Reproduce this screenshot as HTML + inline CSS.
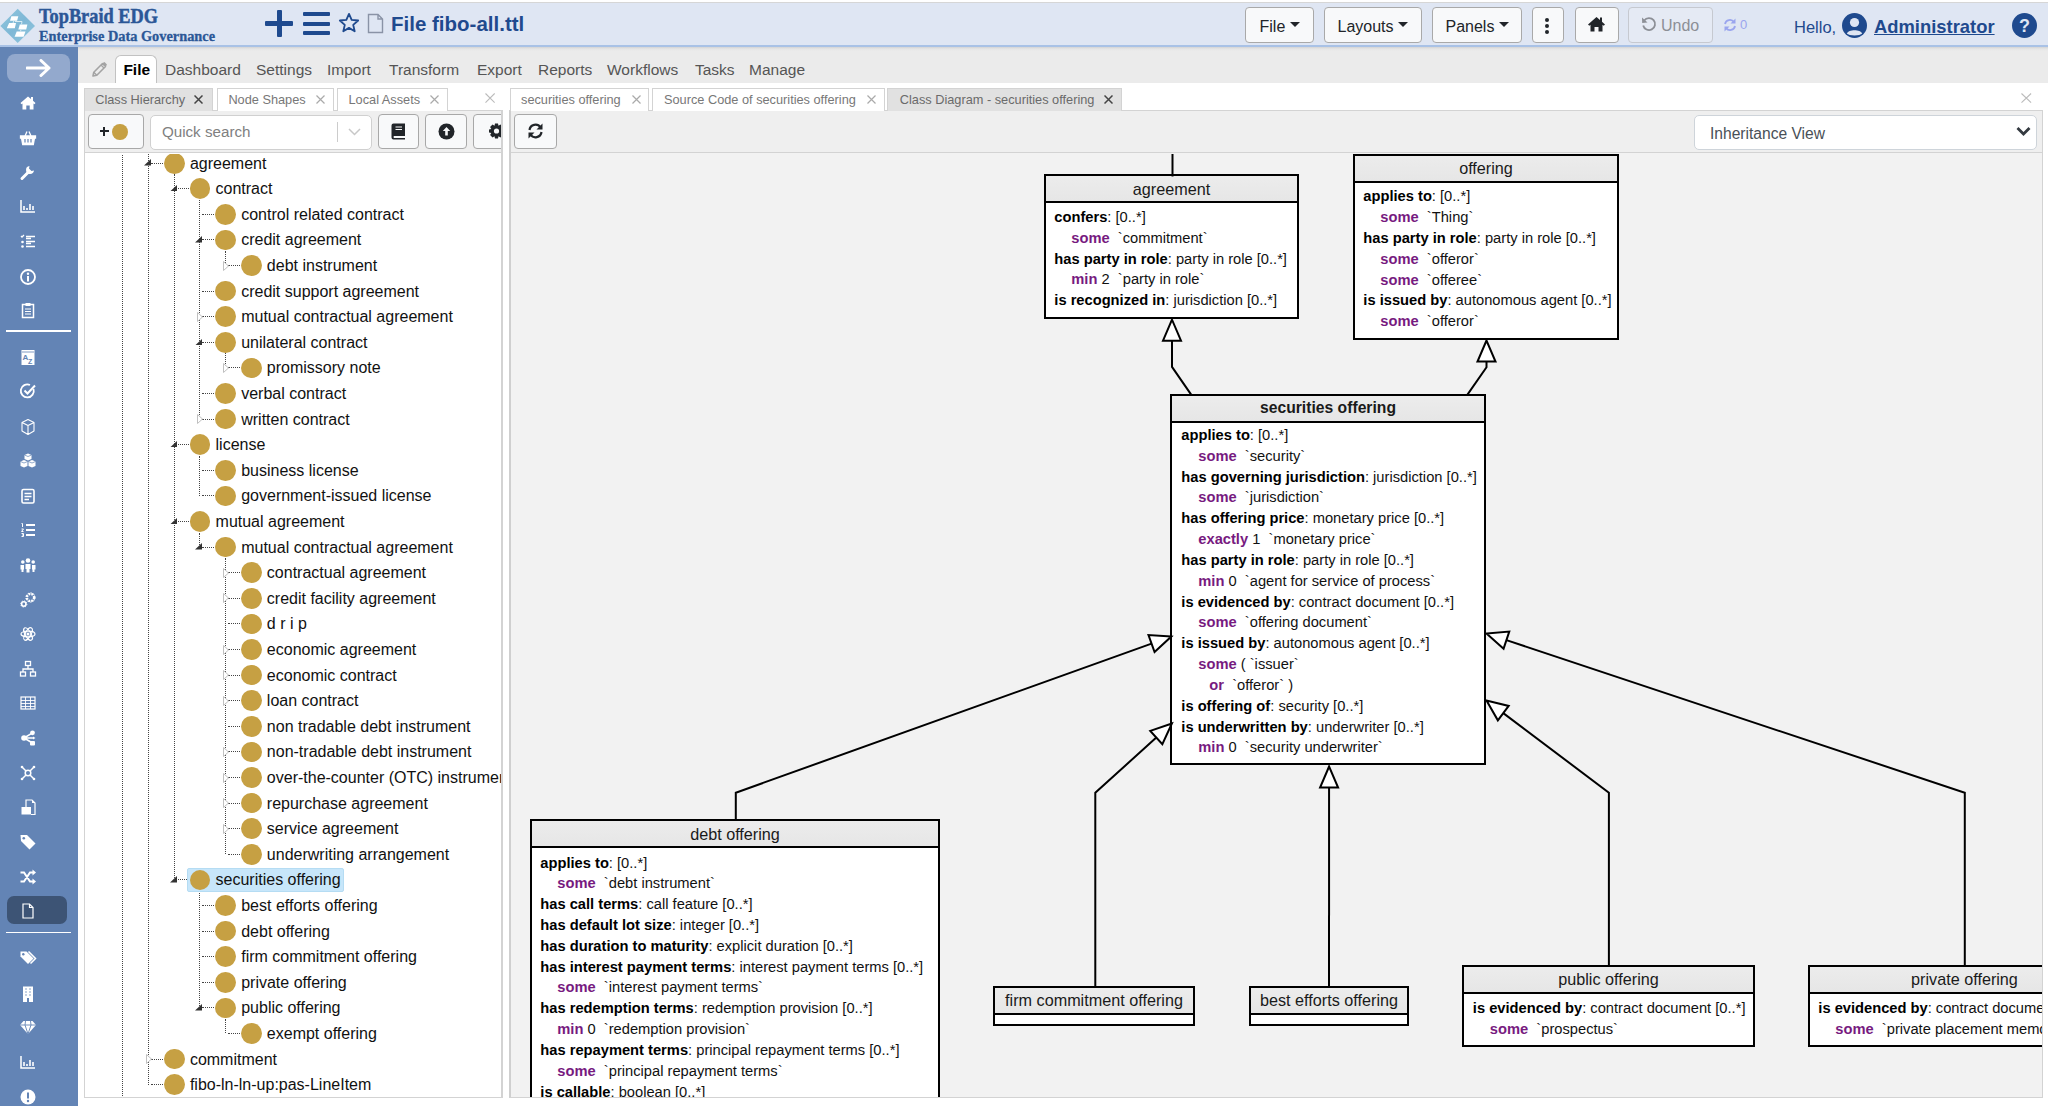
<!DOCTYPE html>
<html><head><meta charset="utf-8"><title>TopBraid EDG</title>
<style>
*{box-sizing:border-box;}
html,body{margin:0;padding:0;width:2048px;height:1106px;overflow:hidden;background:#fff;font-family:"Liberation Sans", sans-serif;}
.a{position:absolute;}
.t{position:absolute;white-space:nowrap;}
.btn{position:absolute;border:1px solid #a9a9a9;border-radius:4px;background:#f8f9fa;}
.ic{position:absolute;}
</style></head><body>

<div class="a" style="left:0;top:0;width:2048px;height:2px;background:#fff"></div>
<div class="a" style="left:0;top:2px;width:2048px;height:1px;background:#d6d6d6"></div>
<div class="a" style="left:0;top:3px;width:2048px;height:42px;background:#dfe6f3"></div>
<div class="a" style="left:0;top:45px;width:2048px;height:1.5px;background:#a9c2e6"></div>
<svg class="ic" style="left:0;top:0" width="40" height="46" viewBox="0 0 40 46">
<defs><linearGradient id="lg" x1="0" y1="0" x2="1" y2="1"><stop offset="0" stop-color="#8fc6dd"/><stop offset="0.5" stop-color="#7fb8d6"/><stop offset="1" stop-color="#92c7de"/></linearGradient></defs>
<polygon points="17.7,8.7 35,25.9 17.7,43 0.4,25.9" fill="url(#lg)"/>
<polygon points="11.4,16.2 18.3,16.2 17.1,20.7 10,20.7" fill="#fff"/>
<polygon points="9.1,23 16,23 14.8,28.3 6.8,28.3" fill="#fff"/>
<polygon points="19.8,24.5 27.4,24.5 26.2,29.5 18.3,29.5" fill="#fff"/>
<polygon points="16.7,31.4 25.5,31.4 23.6,36.7 14.6,36.7" fill="#fff"/>
<path d="M14,20.7 L13,23 M15,21.5 H22 L21.5,24.5 M21,29.5 L20.5,31.4" fill="none" stroke="#d8ecf4" stroke-width="1"/>
</svg>
<div class="t" style="left:39px;top:3.6px;font-family:'Liberation Serif', serif;font-weight:bold;font-size:21.5px;line-height:24px;color:#2b5797;transform:scaleX(0.852);transform-origin:left;-webkit-text-stroke:0.5px #2b5797">TopBraid EDG</div>
<div class="t" style="left:39px;top:26.7px;font-family:'Liberation Serif', serif;font-weight:bold;font-size:15.5px;line-height:17px;color:#2b5797;transform:scaleX(0.925);transform-origin:left;-webkit-text-stroke:0.3px #2b5797">Enterprise Data Governance</div>
<div class="a" style="left:265px;top:21px;width:28px;height:5px;background:#1f4a8e;border-radius:1px"></div>
<div class="a" style="left:276.5px;top:10px;width:5px;height:27px;background:#1f4a8e;border-radius:1px"></div>
<div class="a" style="left:303px;top:12px;width:27px;height:4px;background:#1f4a8e;border-radius:1px"></div>
<div class="a" style="left:303px;top:21.5px;width:27px;height:4px;background:#1f4a8e;border-radius:1px"></div>
<div class="a" style="left:303px;top:31px;width:27px;height:4px;background:#1f4a8e;border-radius:1px"></div>
<svg class="ic" style="left:338px;top:12px" width="22" height="22" viewBox="0 0 24 24">
<polygon points="12,2 14.9,8.6 22,9.3 16.6,14 18.2,21 12,17.3 5.8,21 7.4,14 2,9.3 9.1,8.6" fill="none" stroke="#1f4a8e" stroke-width="2" stroke-linejoin="round"/></svg>
<svg class="ic" style="left:367px;top:13px" width="17" height="21" viewBox="0 0 17 21">
<path d="M1.5,1.5 H11 L15.5,6 V19.5 H1.5 Z M11,1.5 V6 H15.5" fill="none" stroke="#8a93a6" stroke-width="1.4"/></svg>
<div class="t" style="left:391px;top:11px;font-weight:bold;font-size:20.5px;line-height:26px;color:#1f4a8e">File fibo-all.ttl</div>
<div class="btn" style="left:1245px;top:7px;width:69px;height:35.5px;"></div>
<div class="t" style="left:1259.5px;top:16.5px;font-size:16px;line-height:20px;color:#212529">File</div>
<svg class="ic" style="left:1290px;top:22px" width="10" height="6"><polygon points="0,0 10,0 5,5" fill="#212529"/></svg>
<div class="btn" style="left:1323.5px;top:7px;width:98.0px;height:35.5px;"></div>
<div class="t" style="left:1337.5px;top:16.5px;font-size:16px;line-height:20px;color:#212529">Layouts</div>
<svg class="ic" style="left:1398px;top:22px" width="10" height="6"><polygon points="0,0 10,0 5,5" fill="#212529"/></svg>
<div class="btn" style="left:1432px;top:7px;width:90px;height:35.5px;"></div>
<div class="t" style="left:1445.5px;top:16.5px;font-size:16px;line-height:20px;color:#212529">Panels</div>
<svg class="ic" style="left:1499px;top:22px" width="10" height="6"><polygon points="0,0 10,0 5,5" fill="#212529"/></svg>
<div class="btn" style="left:1531.5px;top:7px;width:32.5px;height:35.5px;"></div>
<div class="a" style="left:1545px;top:17.5px;width:4px;height:4px;border-radius:2px;background:#212529"></div>
<div class="a" style="left:1545px;top:23.5px;width:4px;height:4px;border-radius:2px;background:#212529"></div>
<div class="a" style="left:1545px;top:29.5px;width:4px;height:4px;border-radius:2px;background:#212529"></div>
<div class="btn" style="left:1574.5px;top:7px;width:44.0px;height:35.5px;"></div>
<svg class="ic" style="left:1587px;top:16px" width="19" height="16" viewBox="0 0 19 16">
<path d="M9.5,1 L1,8.5 L2.3,9.8 L3.5,8.8 V15.5 H7.5 V11 H11.5 V15.5 H15.5 V8.8 L16.7,9.8 L18,8.5 L15,5.8 V1.5 H13 V4 Z" fill="#212529"/></svg>
<div class="a" style="left:1627.5px;top:7px;width:85px;height:35.5px;border:1px solid #c6c9d0;border-radius:4px;background:#e5eaf4"></div>
<svg class="ic" style="left:1641px;top:16px" width="16" height="16" viewBox="0 0 16 16">
<path d="M3.2,4.5 A6,6 0 1 1 2.2,9.5" fill="none" stroke="#8c8f96" stroke-width="1.8"/>
<polygon points="1,1.5 1.2,7 6.5,6.5" fill="#8c8f96"/></svg>
<div class="t" style="left:1661px;top:15.5px;font-size:16px;line-height:20px;color:#8c8f96">Undo</div>
<svg class="ic" style="left:1723px;top:18px" width="14" height="14" viewBox="0 0 14 14">
<path d="M2,6 A5,5 0 0 1 11,4 M12,8 A5,5 0 0 1 3,10" fill="none" stroke="#9aa5ee" stroke-width="1.8"/>
<polygon points="12.5,0.5 12.5,5.5 7.5,5.5" fill="#9aa5ee"/><polygon points="1.5,13.5 1.5,8.5 6.5,8.5" fill="#9aa5ee"/></svg>
<div class="t" style="left:1740px;top:17px;font-size:13px;line-height:16px;color:#9aa5ee">0</div>
<div class="t" style="left:1794px;top:17px;font-size:16.5px;line-height:20px;color:#1f4a8e">Hello,</div>
<svg class="ic" style="left:1842px;top:13px" width="25" height="25" viewBox="0 0 25 25">
<circle cx="12.5" cy="12.5" r="12.5" fill="#1f4a8e"/>
<circle cx="12.5" cy="9.5" r="4.6" fill="#dfe6f3"/>
<path d="M4.8,20.5 C6.5,16 18.5,16 20.2,20.5 C18,23 7,23 4.8,20.5 Z" fill="#dfe6f3"/></svg>
<div class="t" style="left:1874px;top:14.5px;font-size:18.4px;line-height:24px;font-weight:bold;color:#1f4a8e;text-decoration:underline">Administrator</div>
<svg class="ic" style="left:2012px;top:13px" width="25" height="25" viewBox="0 0 25 25">
<circle cx="12.5" cy="12.5" r="12.5" fill="#1f4a8e"/>
<text x="12.5" y="19" text-anchor="middle" font-family="Liberation Sans" font-weight="bold" font-size="18" fill="#dfe6f3">?</text></svg>
<div class="a" style="left:0;top:46.5px;width:78px;height:1060px;background:#6384b5"></div>
<div class="a" style="left:6.5px;top:54px;width:63.5px;height:27.5px;background:#93a9cd;border-radius:8px"></div>
<svg class="ic" style="left:26px;top:59px" width="26" height="18" viewBox="0 0 26 18">
<path d="M1,9 H23 M15,1.5 L23,9 L15,16.5" fill="none" stroke="#fff" stroke-width="3" stroke-linecap="round" stroke-linejoin="round"/></svg>
<svg class="ic" style="left:19.0px;top:93.5px" width="18" height="18" viewBox="0 0 18 18"><path d="M9,2.5 L1.5,9 L2.5,10.2 L3.5,9.4 V15.5 H7.3 V11.5 H10.7 V15.5 H14.5 V9.4 L15.5,10.2 L16.5,9 L14,6.8 V3 H12 V5 Z" fill="#fff"/></svg>
<svg class="ic" style="left:19.0px;top:128.5px" width="18" height="18" viewBox="0 0 18 18"><path d="M1.5,7 H16.5 V9 H15.5 L14.3,15.5 H3.7 L2.5,9 H1.5 Z M6,7 L8,2.5 M12,7 L10,2.5" fill="#fff" stroke="#fff" stroke-width="1.3"/><path d="M6,10 V13.5 M9,10 V13.5 M12,10 V13.5" stroke="#6384b5" stroke-width="1.2"/></svg>
<svg class="ic" style="left:19.0px;top:163.0px" width="18" height="18" viewBox="0 0 18 18"><path d="M3,15.5 L10,8.5" stroke="#fff" stroke-width="3" stroke-linecap="round"/><path d="M10.5,3 A4,4 0 1 0 15,7.5 L12.5,8 L10,5.5 Z" fill="#fff"/></svg>
<svg class="ic" style="left:19.0px;top:197.0px" width="18" height="18" viewBox="0 0 18 18"><path d="M2,3 V15 H16" fill="none" stroke="#fff" stroke-width="1.5"/><path d="M5,9 V13 M8,11 V13 M11,7 V13 M14,9 V13" stroke="#fff" stroke-width="1.6"/></svg>
<svg class="ic" style="left:19.0px;top:231.5px" width="18" height="18" viewBox="0 0 18 18"><path d="M2,4 L3,5 L5,3 M7,4.5 H16 M7,6.5 H12 M7,9.5 H16 M7,11.5 H12 M7,14.5 H16" fill="none" stroke="#fff" stroke-width="1.3"/><circle cx="3.5" cy="10" r="1.3" fill="#fff"/><circle cx="3.5" cy="14.5" r="1.3" fill="#fff"/></svg>
<svg class="ic" style="left:19.0px;top:267.5px" width="18" height="18" viewBox="0 0 18 18"><circle cx="9" cy="9" r="7" fill="none" stroke="#fff" stroke-width="1.8"/><circle cx="9" cy="5.8" r="1.2" fill="#fff"/><rect x="8" y="8" width="2" height="5.5" fill="#fff"/></svg>
<svg class="ic" style="left:19.0px;top:301.0px" width="18" height="18" viewBox="0 0 18 18"><rect x="3.5" y="3.5" width="11" height="13" fill="none" stroke="#fff" stroke-width="1.5"/><rect x="6.5" y="2" width="5" height="3" fill="#fff"/><path d="M6,8 H12 M6,10.5 H12 M6,13 H12" stroke="#fff" stroke-width="1.2"/></svg>
<svg class="ic" style="left:19.0px;top:348.0px" width="18" height="18" viewBox="0 0 18 18"><rect x="2.5" y="2" width="13" height="15" fill="#fff"/><path d="M3,4 H15" stroke="#6384b5" stroke-width="0.8"/><text x="3.6" y="12" font-family="Liberation Sans" font-size="8" font-weight="bold" fill="#6384b5">A</text><text x="9" y="15.8" font-family="Liberation Sans" font-size="7" font-weight="bold" fill="#6384b5">Z</text></svg>
<svg class="ic" style="left:19.0px;top:382.0px" width="18" height="18" viewBox="0 0 18 18"><path d="M14.5,7 A6.5,6.5 0 1 1 11,3" fill="none" stroke="#fff" stroke-width="1.8"/><path d="M5.5,8.5 L8.5,11.5 L16,3.5" fill="none" stroke="#fff" stroke-width="2"/></svg>
<svg class="ic" style="left:19.0px;top:417.5px" width="18" height="18" viewBox="0 0 18 18"><path d="M9,1.5 L15,4.5 V13 L9,16.5 L3,13 V4.5 Z M3,4.5 L9,7.5 L15,4.5 M9,7.5 V16.5" fill="none" stroke="#fff" stroke-width="1.1" stroke-linejoin="round"/></svg>
<svg class="ic" style="left:19.0px;top:452.0px" width="18" height="18" viewBox="0 0 18 18"><path d="M9,1.5 L12.5,3 V7 L9,8.5 L5.5,7 V3 Z M5,8 L8.5,9.5 V14 L5,15.5 L1.5,14 V9.5 Z M13,8 L16.5,9.5 V14 L13,15.5 L9.5,14 V9.5 Z" fill="#fff"/><path d="M5.5,3 L9,4.5 L12.5,3 M1.5,9.5 L5,11 L8.5,9.5 M9.5,9.5 L13,11 L16.5,9.5" fill="none" stroke="#6384b5" stroke-width="0.7"/></svg>
<svg class="ic" style="left:19.0px;top:487.0px" width="18" height="18" viewBox="0 0 18 18"><rect x="3" y="2.5" width="12" height="13.5" rx="1.5" fill="none" stroke="#fff" stroke-width="1.6"/><path d="M5.5,6.5 H12.5 M5.5,9.5 H12.5 M5.5,12.5 H10" stroke="#fff" stroke-width="1.3"/></svg>
<svg class="ic" style="left:19.0px;top:521.0px" width="18" height="18" viewBox="0 0 18 18"><path d="M7,4 H16 M7,9 H16 M7,14 H16" stroke="#fff" stroke-width="1.8"/><path d="M2.5,2.5 H3.5 V6 M2.5,8 H4.5 L2.5,10.5 H4.5 M2.5,12.5 H4.5 V15.5 H2.5 M3,14 H4.5" fill="none" stroke="#fff" stroke-width="1"/></svg>
<svg class="ic" style="left:19.0px;top:556.0px" width="18" height="18" viewBox="0 0 18 18"><circle cx="9" cy="4.5" r="2.3" fill="#fff"/><circle cx="3.8" cy="6" r="1.8" fill="#fff"/><circle cx="14.2" cy="6" r="1.8" fill="#fff"/><path d="M6.5,8 H11.5 V13 H10.5 V16.5 H7.5 V13 H6.5 Z M1.5,9 H5 V13.5 H4.5 V16 H2.5 V13.5 H1.5 Z M13,9 H16.5 V13.5 H15.5 V16 H13.5 V13.5 H13 Z" fill="#fff"/></svg>
<svg class="ic" style="left:19.0px;top:590.5px" width="18" height="18" viewBox="0 0 18 18"><circle cx="11.5" cy="6.5" r="3.6" fill="none" stroke="#fff" stroke-width="2.4" stroke-dasharray="1.9 1"/><circle cx="11.5" cy="6.5" r="4.6" fill="none" stroke="#fff" stroke-width="1" stroke-dasharray="1.5 1.5"/><circle cx="4.8" cy="13" r="2.2" fill="none" stroke="#fff" stroke-width="1.6"/><circle cx="4.8" cy="13" r="3.1" fill="none" stroke="#fff" stroke-width="0.9" stroke-dasharray="1.2 1.2"/></svg>
<svg class="ic" style="left:19.0px;top:625.0px" width="18" height="18" viewBox="0 0 18 18"><ellipse cx="9" cy="9" rx="7" ry="2.8" fill="none" stroke="#fff" stroke-width="1.2"/><ellipse cx="9" cy="9" rx="7" ry="2.8" fill="none" stroke="#fff" stroke-width="1.2" transform="rotate(60 9 9)"/><ellipse cx="9" cy="9" rx="7" ry="2.8" fill="none" stroke="#fff" stroke-width="1.2" transform="rotate(-60 9 9)"/><circle cx="9" cy="9" r="1.5" fill="#fff"/></svg>
<svg class="ic" style="left:19.0px;top:660.0px" width="18" height="18" viewBox="0 0 18 18"><rect x="6.5" y="1.5" width="5" height="4" fill="none" stroke="#fff" stroke-width="1.3"/><rect x="1.5" y="12" width="5" height="4" fill="none" stroke="#fff" stroke-width="1.3"/><rect x="11.5" y="12" width="5" height="4" fill="none" stroke="#fff" stroke-width="1.3"/><path d="M9,5.5 V9 M4,12 V9 H14 V12" fill="none" stroke="#fff" stroke-width="1.3"/></svg>
<svg class="ic" style="left:19.0px;top:694.0px" width="18" height="18" viewBox="0 0 18 18"><rect x="2" y="3" width="14" height="12" fill="none" stroke="#fff" stroke-width="1.2"/><path d="M2,6.5 H16 M2,9.5 H16 M2,12.5 H16 M6.5,3 V15 M11.5,3 V15" stroke="#fff" stroke-width="0.9"/></svg>
<svg class="ic" style="left:19.0px;top:729.0px" width="18" height="18" viewBox="0 0 18 18"><circle cx="5" cy="9" r="2.8" fill="#fff"/><circle cx="13.5" cy="3.8" r="2.4" fill="#fff"/><rect x="11" y="12" width="5" height="4.5" rx="1" fill="#fff"/><path d="M5,9 L13.5,3.8 M5,9 H15 M5,9 L13.5,14" fill="none" stroke="#fff" stroke-width="1.5"/><polygon points="14,7.5 16.5,9 14,10.5" fill="#fff"/></svg>
<svg class="ic" style="left:19.0px;top:763.5px" width="18" height="18" viewBox="0 0 18 18"><circle cx="9" cy="9" r="2.8" fill="none" stroke="#fff" stroke-width="1.5"/><path d="M3,3 L7,7 M15,3 L11,7 M3,15 L7,11 M15,15 L11,11" stroke="#fff" stroke-width="1.5"/><circle cx="3" cy="3" r="1.3" fill="#fff"/><circle cx="15" cy="3" r="1.3" fill="#fff"/><circle cx="3" cy="15" r="1.3" fill="#fff"/><circle cx="15" cy="15" r="1.3" fill="#fff"/></svg>
<svg class="ic" style="left:19.0px;top:798.0px" width="18" height="18" viewBox="0 0 18 18"><rect x="2.5" y="9" width="9.5" height="7.5" fill="#fff"/><path d="M7,9 V2 H13 L16,5 V16.5 H12" fill="none" stroke="#fff" stroke-width="1.2"/><polygon points="13,2 16,5 13,5" fill="#fff"/></svg>
<svg class="ic" style="left:19.0px;top:833.0px" width="18" height="18" viewBox="0 0 18 18"><path d="M1.5,2 H8 L16.5,10.5 L10.5,16.5 L2,8 Z" fill="#fff"/><circle cx="4.8" cy="5.3" r="1.3" fill="#6384b5"/></svg>
<svg class="ic" style="left:19.0px;top:867.5px" width="18" height="18" viewBox="0 0 18 18"><path d="M1.5,4.5 H5 L11,13.5 H14.5 M1.5,13.5 H5 L11,4.5 H14.5" fill="none" stroke="#fff" stroke-width="2"/><polygon points="13.5,1.5 17,4.5 13.5,7.5" fill="#fff"/><polygon points="13.5,10.5 17,13.5 13.5,16.5" fill="#fff"/></svg>
<svg class="ic" style="left:19.0px;top:949.0px" width="18" height="18" viewBox="0 0 18 18"><path d="M1.5,2.5 H7.5 L14.5,9.5 L9,15 L1.5,7.5 Z" fill="#fff"/><path d="M9.5,2.5 L16.5,9.5 L11.5,14.5" fill="none" stroke="#fff" stroke-width="1.5"/><circle cx="4.3" cy="5.3" r="1.2" fill="#6384b5"/></svg>
<svg class="ic" style="left:19.0px;top:984.5px" width="18" height="18" viewBox="0 0 18 18"><rect x="4" y="1.5" width="10" height="15.5" fill="#fff"/><path d="M6.5,4 H7.5 M10.5,4 H11.5 M6.5,7 H7.5 M10.5,7 H11.5 M6.5,10 H7.5 M10.5,10 H11.5" stroke="#6384b5" stroke-width="1.6"/><rect x="8" y="13" width="2" height="4" fill="#6384b5"/></svg>
<svg class="ic" style="left:19.0px;top:1018.0px" width="18" height="18" viewBox="0 0 18 18"><path d="M4.5,3 H13.5 L17,7 L9,16 L1,7 Z" fill="#fff"/><path d="M1,7 H17 M6,7 L9,16 L12,7 M6.5,3 L6,7 M11.5,3 L12,7" fill="none" stroke="#6384b5" stroke-width="0.9"/></svg>
<svg class="ic" style="left:19.0px;top:1053.0px" width="18" height="18" viewBox="0 0 18 18"><path d="M2,3 V15 H16" fill="none" stroke="#fff" stroke-width="1.5"/><path d="M5,9 V13 M8,11 V13 M11,7 V13 M14,9 V13" stroke="#fff" stroke-width="1.6"/></svg>
<svg class="ic" style="left:19.0px;top:1087.5px" width="18" height="18" viewBox="0 0 18 18"><circle cx="9" cy="9" r="7.5" fill="#fff"/><rect x="8" y="4.5" width="2" height="6" fill="#6384b5"/><circle cx="9" cy="13" r="1.2" fill="#6384b5"/></svg>
<div class="a" style="left:6px;top:330px;width:64.5px;height:1.6px;background:#fff"></div>
<div class="a" style="left:6.5px;top:896.3px;width:60.3px;height:28.2px;background:#3d5475;border-radius:7px"></div>
<svg class="ic" style="left:19.0px;top:902.0px" width="18" height="18" viewBox="0 0 18 18"><path d="M4,2 H10.5 L14,5.5 V16 H4 Z M10.5,2 V5.5 H14" fill="none" stroke="#fff" stroke-width="1.2"/></svg>
<div class="a" style="left:6px;top:931.5px;width:64.5px;height:1.6px;background:#fff"></div>
<div class="a" style="left:78px;top:46.5px;width:1970px;height:36px;background:linear-gradient(#d4d4d4 0px,#e6e6e6 2px,#ebebeb 4px)"></div>
<svg class="ic" style="left:91px;top:61px" width="17" height="17" viewBox="0 0 17 17">
<path d="M2,15 L2.8,11.2 L11.5,2.5 L14.5,5.5 L5.8,14.2 Z" fill="none" stroke="#a3a3a3" stroke-width="1.6" stroke-linejoin="round"/><path d="M10,4 L13,7 M2.8,11.2 L5.8,14.2" stroke="#a3a3a3" stroke-width="1.3"/><path d="M11.5,2.5 L12.5,1.5 A1,1 0 0 1 14,1.5 L15.5,3 A1,1 0 0 1 15.5,4.5 L14.5,5.5 Z" fill="#a3a3a3"/></svg>
<div class="a" style="left:115px;top:54.5px;width:42px;height:28.5px;background:#fff;border:1.5px solid #c2c2c2;border-bottom:none;border-radius:6px 6px 0 0"></div>
<div class="t" style="left:123.40px;top:59.93px;font-size:15.5px;line-height:20px;color:#000;font-weight:bold;">File</div>
<div class="t" style="left:165.00px;top:59.93px;font-size:15.5px;line-height:20px;color:#555;font-weight:normal;">Dashboard</div>
<div class="t" style="left:256.00px;top:59.93px;font-size:15.5px;line-height:20px;color:#555;font-weight:normal;">Settings</div>
<div class="t" style="left:327.00px;top:59.93px;font-size:15.5px;line-height:20px;color:#555;font-weight:normal;">Import</div>
<div class="t" style="left:389.00px;top:59.93px;font-size:15.5px;line-height:20px;color:#555;font-weight:normal;">Transform</div>
<div class="t" style="left:477.00px;top:59.93px;font-size:15.5px;line-height:20px;color:#555;font-weight:normal;">Export</div>
<div class="t" style="left:538.00px;top:59.93px;font-size:15.5px;line-height:20px;color:#555;font-weight:normal;">Reports</div>
<div class="t" style="left:607.00px;top:59.93px;font-size:15.5px;line-height:20px;color:#555;font-weight:normal;">Workflows</div>
<div class="t" style="left:695.00px;top:59.93px;font-size:15.5px;line-height:20px;color:#555;font-weight:normal;">Tasks</div>
<div class="t" style="left:749.00px;top:59.93px;font-size:15.5px;line-height:20px;color:#555;font-weight:normal;">Manage</div>
<div class="a" style="left:83.5px;top:109.5px;width:419.5px;height:988px;background:#fff;border:1.5px solid #d3d3d3"></div>
<div class="a" style="left:85px;top:111px;width:416.5px;height:42px;background:#efefef;border-bottom:1.5px solid #d3d3d3"></div>
<div class="a" style="left:83.5px;top:88px;width:129.0px;height:22.5px;background:#e1e1e1;border:1.5px solid #d3d3d3;border-bottom:none"></div>
<div class="t" style="left:95.20px;top:90.68px;font-size:12.75px;line-height:17px;color:#6a6a6a;font-weight:normal;">Class Hierarchy</div>
<svg class="ic" style="left:193.5px;top:95px" width="9.0" height="9" viewBox="0 0 9.0 9"><path d="M0.5,0.5 L8.5,8.5 M8.5,0.5 L0.5,8.5" stroke="#444" stroke-width="1.5"/></svg>
<div class="a" style="left:216.7px;top:88px;width:117.30000000000001px;height:22.5px;background:#fff;border:1.5px solid #d3d3d3;border-bottom:none"></div>
<div class="t" style="left:228.40px;top:90.68px;font-size:12.75px;line-height:17px;color:#777;font-weight:normal;">Node Shapes</div>
<svg class="ic" style="left:316px;top:95px" width="9" height="9" viewBox="0 0 9 9"><path d="M0.5,0.5 L8.5,8.5 M8.5,0.5 L0.5,8.5" stroke="#aaa" stroke-width="1.2"/></svg>
<div class="a" style="left:336.8px;top:88px;width:110.80000000000001px;height:22.5px;background:#fff;border:1.5px solid #d3d3d3;border-bottom:none"></div>
<div class="t" style="left:348.50px;top:90.68px;font-size:12.75px;line-height:17px;color:#777;font-weight:normal;">Local Assets</div>
<svg class="ic" style="left:430px;top:95px" width="9" height="9" viewBox="0 0 9 9"><path d="M0.5,0.5 L8.5,8.5 M8.5,0.5 L0.5,8.5" stroke="#aaa" stroke-width="1.2"/></svg>
<svg class="ic" style="left:484.8px;top:92.6px" width="10.199999999999989" height="10.100000000000009" viewBox="0 0 10.199999999999989 10.100000000000009"><path d="M0.5,0.5 L9.699999999999989,9.600000000000009 M9.699999999999989,0.5 L0.5,9.600000000000009" stroke="#bbb" stroke-width="1.1"/></svg>
<div class="a" style="left:509px;top:109.5px;width:1534px;height:988px;background:#f2f2f2;border:1.5px solid #d3d3d3;border-left:2px solid #cfcfcf"></div>
<div class="a" style="left:510.5px;top:111px;width:1531px;height:42px;background:#efefef;border-bottom:1.5px solid #d3d3d3"></div>
<div class="a" style="left:509.8px;top:88px;width:139.59999999999997px;height:22.5px;background:#fff;border:1.5px solid #d3d3d3;border-bottom:none"></div>
<div class="t" style="left:521.00px;top:90.68px;font-size:12.75px;line-height:17px;color:#777;font-weight:normal;">securities offering</div>
<svg class="ic" style="left:631.8px;top:95px" width="9.0" height="9" viewBox="0 0 9.0 9"><path d="M0.5,0.5 L8.5,8.5 M8.5,0.5 L0.5,8.5" stroke="#aaa" stroke-width="1.2"/></svg>
<div class="a" style="left:652.3px;top:88px;width:232.5px;height:22.5px;background:#fff;border:1.5px solid #d3d3d3;border-bottom:none"></div>
<div class="t" style="left:664.00px;top:90.68px;font-size:12.75px;line-height:17px;color:#777;font-weight:normal;">Source Code of securities offering</div>
<svg class="ic" style="left:867px;top:95px" width="9" height="9" viewBox="0 0 9 9"><path d="M0.5,0.5 L8.5,8.5 M8.5,0.5 L0.5,8.5" stroke="#aaa" stroke-width="1.2"/></svg>
<div class="a" style="left:887.3px;top:88px;width:234.4000000000001px;height:22.5px;background:#e1e1e1;border:1.5px solid #d3d3d3;border-bottom:none"></div>
<div class="t" style="left:899.80px;top:90.68px;font-size:12.75px;line-height:17px;color:#6a6a6a;font-weight:normal;">Class Diagram - securities offering</div>
<svg class="ic" style="left:1104px;top:95px" width="9" height="9" viewBox="0 0 9 9"><path d="M0.5,0.5 L8.5,8.5 M8.5,0.5 L0.5,8.5" stroke="#444" stroke-width="1.5"/></svg>
<svg class="ic" style="left:2021.4px;top:92.6px" width="10.599999999999909" height="10.100000000000009" viewBox="0 0 10.599999999999909 10.100000000000009"><path d="M0.5,0.5 L10.099999999999909,9.600000000000009 M10.099999999999909,0.5 L0.5,9.600000000000009" stroke="#bbb" stroke-width="1.1"/></svg>
<div class="btn" style="left:88.3px;top:114px;width:55.3px;height:34.5px;border-width:1.5px;border-color:#a8a8a8"></div>
<div class="a" style="left:99.5px;top:130.2px;width:9.5px;height:2.2px;background:#212529"></div>
<div class="a" style="left:103.2px;top:126.5px;width:2.2px;height:9.5px;background:#212529"></div>
<div class="a" style="left:112.2px;top:123.5px;width:16px;height:16.5px;border-radius:50%;background:#c6a043"></div>
<div class="a" style="left:149.5px;top:114.5px;width:222.5px;height:35px;background:#fff;border:1.5px solid #d0d0d0;border-radius:5px"></div>
<div class="t" style="left:161.90px;top:122.23px;font-size:15.2px;line-height:20px;color:#808080;font-weight:normal;">Quick search</div>
<div class="a" style="left:336.5px;top:122px;width:1.5px;height:20px;background:#ccc"></div>
<svg class="ic" style="left:348px;top:128px" width="13" height="8" viewBox="0 0 13 8"><path d="M1,1 L6.5,6.5 L12,1" fill="none" stroke="#c8c8c8" stroke-width="1.5"/></svg>
<div class="btn" style="left:378.4px;top:114px;width:40.3px;height:34.5px;border-width:1.5px;border-color:#a8a8a8"></div>
<svg class="ic" style="left:391px;top:123px" width="15" height="17" viewBox="0 0 15 17">
<path d="M2.5,0.5 H14 V13 H3 A1.3,1.3 0 0 0 3,15 H14 V16.5 H2.5 A2,2 0 0 1 0.5,14.5 V2.5 A2,2 0 0 1 2.5,0.5 Z" fill="#212529"/>
<path d="M4.5,4 H11 M4.5,6.5 H11" stroke="#f8f9fa" stroke-width="1"/></svg>
<div class="btn" style="left:424.8px;top:114px;width:41.8px;height:34.5px;border-width:1.5px;border-color:#a8a8a8"></div>
<svg class="ic" style="left:437.5px;top:123px" width="17" height="17" viewBox="0 0 17 17">
<circle cx="8.5" cy="8.5" r="8" fill="#212529"/><path d="M8.5,4 L4.8,8 H7.2 V12.5 H9.8 V8 H12.2 Z" fill="#f8f9fa"/></svg>
<div style="position:absolute;left:472.7px;top:114px;width:29px;height:34.5px;overflow:hidden"><div class="btn" style="left:0;top:0;width:45px;height:34.5px;border-width:1.5px;border-color:#a8a8a8"></div><svg class="ic" style="left:15px;top:9px" width="17" height="17" viewBox="0 0 17 17"><path d="M7,0.5 H10 L10.5,2.8 L12.5,1.6 L14.9,4 L13.7,6 L16,6.5 V9.5 L13.7,10 L14.9,12 L12.5,14.4 L10.5,13.2 L10,15.5 H7 L6.5,13.2 L4.5,14.4 L2.1,12 L3.3,10 L1,9.5 V6.5 L3.3,6 L2.1,4 L4.5,1.6 L6.5,2.8 Z" fill="#212529"/><circle cx="8.5" cy="8" r="2.6" fill="#f8f9fa"/></svg></div>
<div class="a" style="left:501px;top:110px;width:2px;height:987px;background:#d3d3d3"></div>
<div class="btn" style="left:514.3px;top:114px;width:42.4px;height:34.5px;border-width:1.5px;border-color:#a8a8a8"></div>
<svg class="ic" style="left:527px;top:123px" width="17" height="16" viewBox="0 0 17 16">
<path d="M2.5,7 A6,6 0 0 1 13.5,4.5 M14.5,9 A6,6 0 0 1 3.5,11.5" fill="none" stroke="#212529" stroke-width="2.2"/>
<polygon points="15.5,0.5 15.5,6.5 9.5,6.5" fill="#212529"/><polygon points="1.5,15.5 1.5,9.5 7.5,9.5" fill="#212529"/></svg>
<div class="a" style="left:1693.5px;top:114.5px;width:343.7px;height:35px;background:#fff;border:1.5px solid #ced4da;border-radius:5px"></div>
<div class="t" style="left:1710.00px;top:123.59px;font-size:15.6px;line-height:20px;color:#495057;font-weight:normal;">Inheritance View</div>
<svg class="ic" style="left:2016px;top:126px" width="15" height="11" viewBox="0 0 15 11"><path d="M1.5,2 L7.5,8 L13.5,2" fill="none" stroke="#343a40" stroke-width="2.8"/></svg>
<div style="position:absolute;left:85px;top:153.5px;width:416px;height:943px;overflow:hidden">
<div class="a" style="left:37.30px;top:-13.50px;width:0;height:970.00px;border-left:1px dotted #444"></div>
<div class="a" style="left:88.75px;top:20.60px;width:0;height:705.80px;border-left:1px dotted #444"></div>
<div class="a" style="left:114.40px;top:46.20px;width:0;height:219.40px;border-left:1px dotted #444"></div>
<div class="a" style="left:140.05px;top:97.40px;width:0;height:14.60px;border-left:1px dotted #444"></div>
<div class="a" style="left:140.05px;top:199.80px;width:0;height:14.60px;border-left:1px dotted #444"></div>
<div class="a" style="left:114.40px;top:302.20px;width:0;height:40.20px;border-left:1px dotted #444"></div>
<div class="a" style="left:114.40px;top:379.00px;width:0;height:14.60px;border-left:1px dotted #444"></div>
<div class="a" style="left:140.05px;top:404.60px;width:0;height:296.20px;border-left:1px dotted #444"></div>
<div class="a" style="left:114.40px;top:737.40px;width:0;height:117.00px;border-left:1px dotted #444"></div>
<div class="a" style="left:140.05px;top:865.40px;width:0;height:14.60px;border-left:1px dotted #444"></div>
<div class="a" style="left:63.10px;top:-13.50px;width:0;height:944.70px;border-left:1px dotted #444"></div>
<div class="a" style="left:65.60px;top:9.10px;width:12.30px;height:0;border-top:1px dotted #444"></div>
<svg class="ic" style="left:59.10px;top:5.80px" width="7" height="6.5" viewBox="0 0 7 6.5"><polygon points="7,0 7,6.5 0,6.5" fill="#333"/></svg>
<div class="a" style="left:78.90px;top:-0.80px;width:20.8px;height:20.8px;border-radius:50%;background:#c6a043"></div>
<div class="t" style="left:104.90px;top:0.16px;font-size:16px;line-height:20px;color:#111">agreement</div>
<div class="a" style="left:91.25px;top:34.70px;width:12.30px;height:0;border-top:1px dotted #444"></div>
<svg class="ic" style="left:84.75px;top:31.40px" width="7" height="6.5" viewBox="0 0 7 6.5"><polygon points="7,0 7,6.5 0,6.5" fill="#333"/></svg>
<div class="a" style="left:104.55px;top:24.80px;width:20.8px;height:20.8px;border-radius:50%;background:#c6a043"></div>
<div class="t" style="left:130.55px;top:25.76px;font-size:16px;line-height:20px;color:#111">contract</div>
<div class="a" style="left:116.90px;top:60.30px;width:12.30px;height:0;border-top:1px dotted #444"></div>
<div class="a" style="left:130.20px;top:50.40px;width:20.8px;height:20.8px;border-radius:50%;background:#c6a043"></div>
<div class="t" style="left:156.20px;top:51.36px;font-size:16px;line-height:20px;color:#111">control related contract</div>
<div class="a" style="left:116.90px;top:85.90px;width:12.30px;height:0;border-top:1px dotted #444"></div>
<svg class="ic" style="left:110.40px;top:82.60px" width="7" height="6.5" viewBox="0 0 7 6.5"><polygon points="7,0 7,6.5 0,6.5" fill="#333"/></svg>
<div class="a" style="left:130.20px;top:76.00px;width:20.8px;height:20.8px;border-radius:50%;background:#c6a043"></div>
<div class="t" style="left:156.20px;top:76.96px;font-size:16px;line-height:20px;color:#111">credit agreement</div>
<div class="a" style="left:142.55px;top:111.50px;width:12.30px;height:0;border-top:1px dotted #444"></div>
<svg class="ic" style="left:138.05px;top:107.00px" width="6" height="10" viewBox="0 0 6 10"><polygon points="0.5,0.5 5.5,5 0.5,9.5" fill="#fff" stroke="#c0c0c0" stroke-width="1"/></svg>
<div class="a" style="left:155.85px;top:101.60px;width:20.8px;height:20.8px;border-radius:50%;background:#c6a043"></div>
<div class="t" style="left:181.85px;top:102.56px;font-size:16px;line-height:20px;color:#111">debt instrument</div>
<div class="a" style="left:116.90px;top:137.10px;width:12.30px;height:0;border-top:1px dotted #444"></div>
<div class="a" style="left:130.20px;top:127.20px;width:20.8px;height:20.8px;border-radius:50%;background:#c6a043"></div>
<div class="t" style="left:156.20px;top:128.16px;font-size:16px;line-height:20px;color:#111">credit support agreement</div>
<div class="a" style="left:116.90px;top:162.70px;width:12.30px;height:0;border-top:1px dotted #444"></div>
<svg class="ic" style="left:112.40px;top:158.20px" width="6" height="10" viewBox="0 0 6 10"><polygon points="0.5,0.5 5.5,5 0.5,9.5" fill="#fff" stroke="#c0c0c0" stroke-width="1"/></svg>
<div class="a" style="left:130.20px;top:152.80px;width:20.8px;height:20.8px;border-radius:50%;background:#c6a043"></div>
<div class="t" style="left:156.20px;top:153.76px;font-size:16px;line-height:20px;color:#111">mutual contractual agreement</div>
<div class="a" style="left:116.90px;top:188.30px;width:12.30px;height:0;border-top:1px dotted #444"></div>
<svg class="ic" style="left:110.40px;top:185.00px" width="7" height="6.5" viewBox="0 0 7 6.5"><polygon points="7,0 7,6.5 0,6.5" fill="#333"/></svg>
<div class="a" style="left:130.20px;top:178.40px;width:20.8px;height:20.8px;border-radius:50%;background:#c6a043"></div>
<div class="t" style="left:156.20px;top:179.36px;font-size:16px;line-height:20px;color:#111">unilateral contract</div>
<div class="a" style="left:142.55px;top:213.90px;width:12.30px;height:0;border-top:1px dotted #444"></div>
<svg class="ic" style="left:138.05px;top:209.40px" width="6" height="10" viewBox="0 0 6 10"><polygon points="0.5,0.5 5.5,5 0.5,9.5" fill="#fff" stroke="#c0c0c0" stroke-width="1"/></svg>
<div class="a" style="left:155.85px;top:204.00px;width:20.8px;height:20.8px;border-radius:50%;background:#c6a043"></div>
<div class="t" style="left:181.85px;top:204.96px;font-size:16px;line-height:20px;color:#111">promissory note</div>
<div class="a" style="left:116.90px;top:239.50px;width:12.30px;height:0;border-top:1px dotted #444"></div>
<div class="a" style="left:130.20px;top:229.60px;width:20.8px;height:20.8px;border-radius:50%;background:#c6a043"></div>
<div class="t" style="left:156.20px;top:230.56px;font-size:16px;line-height:20px;color:#111">verbal contract</div>
<div class="a" style="left:116.90px;top:265.10px;width:12.30px;height:0;border-top:1px dotted #444"></div>
<svg class="ic" style="left:112.40px;top:260.60px" width="6" height="10" viewBox="0 0 6 10"><polygon points="0.5,0.5 5.5,5 0.5,9.5" fill="#fff" stroke="#c0c0c0" stroke-width="1"/></svg>
<div class="a" style="left:130.20px;top:255.20px;width:20.8px;height:20.8px;border-radius:50%;background:#c6a043"></div>
<div class="t" style="left:156.20px;top:256.16px;font-size:16px;line-height:20px;color:#111">written contract</div>
<div class="a" style="left:91.25px;top:290.70px;width:12.30px;height:0;border-top:1px dotted #444"></div>
<svg class="ic" style="left:84.75px;top:287.40px" width="7" height="6.5" viewBox="0 0 7 6.5"><polygon points="7,0 7,6.5 0,6.5" fill="#333"/></svg>
<div class="a" style="left:104.55px;top:280.80px;width:20.8px;height:20.8px;border-radius:50%;background:#c6a043"></div>
<div class="t" style="left:130.55px;top:281.76px;font-size:16px;line-height:20px;color:#111">license</div>
<div class="a" style="left:116.90px;top:316.30px;width:12.30px;height:0;border-top:1px dotted #444"></div>
<div class="a" style="left:130.20px;top:306.40px;width:20.8px;height:20.8px;border-radius:50%;background:#c6a043"></div>
<div class="t" style="left:156.20px;top:307.36px;font-size:16px;line-height:20px;color:#111">business license</div>
<div class="a" style="left:116.90px;top:341.90px;width:12.30px;height:0;border-top:1px dotted #444"></div>
<div class="a" style="left:130.20px;top:332.00px;width:20.8px;height:20.8px;border-radius:50%;background:#c6a043"></div>
<div class="t" style="left:156.20px;top:332.96px;font-size:16px;line-height:20px;color:#111">government-issued license</div>
<div class="a" style="left:91.25px;top:367.50px;width:12.30px;height:0;border-top:1px dotted #444"></div>
<svg class="ic" style="left:84.75px;top:364.20px" width="7" height="6.5" viewBox="0 0 7 6.5"><polygon points="7,0 7,6.5 0,6.5" fill="#333"/></svg>
<div class="a" style="left:104.55px;top:357.60px;width:20.8px;height:20.8px;border-radius:50%;background:#c6a043"></div>
<div class="t" style="left:130.55px;top:358.56px;font-size:16px;line-height:20px;color:#111">mutual agreement</div>
<div class="a" style="left:116.90px;top:393.10px;width:12.30px;height:0;border-top:1px dotted #444"></div>
<svg class="ic" style="left:110.40px;top:389.80px" width="7" height="6.5" viewBox="0 0 7 6.5"><polygon points="7,0 7,6.5 0,6.5" fill="#333"/></svg>
<div class="a" style="left:130.20px;top:383.20px;width:20.8px;height:20.8px;border-radius:50%;background:#c6a043"></div>
<div class="t" style="left:156.20px;top:384.16px;font-size:16px;line-height:20px;color:#111">mutual contractual agreement</div>
<div class="a" style="left:142.55px;top:418.70px;width:12.30px;height:0;border-top:1px dotted #444"></div>
<svg class="ic" style="left:138.05px;top:414.20px" width="6" height="10" viewBox="0 0 6 10"><polygon points="0.5,0.5 5.5,5 0.5,9.5" fill="#fff" stroke="#c0c0c0" stroke-width="1"/></svg>
<div class="a" style="left:155.85px;top:408.80px;width:20.8px;height:20.8px;border-radius:50%;background:#c6a043"></div>
<div class="t" style="left:181.85px;top:409.76px;font-size:16px;line-height:20px;color:#111">contractual agreement</div>
<div class="a" style="left:142.55px;top:444.30px;width:12.30px;height:0;border-top:1px dotted #444"></div>
<svg class="ic" style="left:138.05px;top:439.80px" width="6" height="10" viewBox="0 0 6 10"><polygon points="0.5,0.5 5.5,5 0.5,9.5" fill="#fff" stroke="#c0c0c0" stroke-width="1"/></svg>
<div class="a" style="left:155.85px;top:434.40px;width:20.8px;height:20.8px;border-radius:50%;background:#c6a043"></div>
<div class="t" style="left:181.85px;top:435.36px;font-size:16px;line-height:20px;color:#111">credit facility agreement</div>
<div class="a" style="left:142.55px;top:469.90px;width:12.30px;height:0;border-top:1px dotted #444"></div>
<div class="a" style="left:155.85px;top:460.00px;width:20.8px;height:20.8px;border-radius:50%;background:#c6a043"></div>
<div class="t" style="left:181.85px;top:460.96px;font-size:16px;line-height:20px;color:#111">d r i p</div>
<div class="a" style="left:142.55px;top:495.50px;width:12.30px;height:0;border-top:1px dotted #444"></div>
<svg class="ic" style="left:138.05px;top:491.00px" width="6" height="10" viewBox="0 0 6 10"><polygon points="0.5,0.5 5.5,5 0.5,9.5" fill="#fff" stroke="#c0c0c0" stroke-width="1"/></svg>
<div class="a" style="left:155.85px;top:485.60px;width:20.8px;height:20.8px;border-radius:50%;background:#c6a043"></div>
<div class="t" style="left:181.85px;top:486.56px;font-size:16px;line-height:20px;color:#111">economic agreement</div>
<div class="a" style="left:142.55px;top:521.10px;width:12.30px;height:0;border-top:1px dotted #444"></div>
<svg class="ic" style="left:138.05px;top:516.60px" width="6" height="10" viewBox="0 0 6 10"><polygon points="0.5,0.5 5.5,5 0.5,9.5" fill="#fff" stroke="#c0c0c0" stroke-width="1"/></svg>
<div class="a" style="left:155.85px;top:511.20px;width:20.8px;height:20.8px;border-radius:50%;background:#c6a043"></div>
<div class="t" style="left:181.85px;top:512.16px;font-size:16px;line-height:20px;color:#111">economic contract</div>
<div class="a" style="left:142.55px;top:546.70px;width:12.30px;height:0;border-top:1px dotted #444"></div>
<svg class="ic" style="left:138.05px;top:542.20px" width="6" height="10" viewBox="0 0 6 10"><polygon points="0.5,0.5 5.5,5 0.5,9.5" fill="#fff" stroke="#c0c0c0" stroke-width="1"/></svg>
<div class="a" style="left:155.85px;top:536.80px;width:20.8px;height:20.8px;border-radius:50%;background:#c6a043"></div>
<div class="t" style="left:181.85px;top:537.76px;font-size:16px;line-height:20px;color:#111">loan contract</div>
<div class="a" style="left:142.55px;top:572.30px;width:12.30px;height:0;border-top:1px dotted #444"></div>
<div class="a" style="left:155.85px;top:562.40px;width:20.8px;height:20.8px;border-radius:50%;background:#c6a043"></div>
<div class="t" style="left:181.85px;top:563.36px;font-size:16px;line-height:20px;color:#111">non tradable debt instrument</div>
<div class="a" style="left:142.55px;top:597.90px;width:12.30px;height:0;border-top:1px dotted #444"></div>
<svg class="ic" style="left:138.05px;top:593.40px" width="6" height="10" viewBox="0 0 6 10"><polygon points="0.5,0.5 5.5,5 0.5,9.5" fill="#fff" stroke="#c0c0c0" stroke-width="1"/></svg>
<div class="a" style="left:155.85px;top:588.00px;width:20.8px;height:20.8px;border-radius:50%;background:#c6a043"></div>
<div class="t" style="left:181.85px;top:588.96px;font-size:16px;line-height:20px;color:#111">non-tradable debt instrument</div>
<div class="a" style="left:142.55px;top:623.50px;width:12.30px;height:0;border-top:1px dotted #444"></div>
<svg class="ic" style="left:138.05px;top:619.00px" width="6" height="10" viewBox="0 0 6 10"><polygon points="0.5,0.5 5.5,5 0.5,9.5" fill="#fff" stroke="#c0c0c0" stroke-width="1"/></svg>
<div class="a" style="left:155.85px;top:613.60px;width:20.8px;height:20.8px;border-radius:50%;background:#c6a043"></div>
<div class="t" style="left:181.85px;top:614.56px;font-size:16px;line-height:20px;color:#111">over-the-counter (OTC) instrument</div>
<div class="a" style="left:142.55px;top:649.10px;width:12.30px;height:0;border-top:1px dotted #444"></div>
<svg class="ic" style="left:138.05px;top:644.60px" width="6" height="10" viewBox="0 0 6 10"><polygon points="0.5,0.5 5.5,5 0.5,9.5" fill="#fff" stroke="#c0c0c0" stroke-width="1"/></svg>
<div class="a" style="left:155.85px;top:639.20px;width:20.8px;height:20.8px;border-radius:50%;background:#c6a043"></div>
<div class="t" style="left:181.85px;top:640.16px;font-size:16px;line-height:20px;color:#111">repurchase agreement</div>
<div class="a" style="left:142.55px;top:674.70px;width:12.30px;height:0;border-top:1px dotted #444"></div>
<svg class="ic" style="left:138.05px;top:670.20px" width="6" height="10" viewBox="0 0 6 10"><polygon points="0.5,0.5 5.5,5 0.5,9.5" fill="#fff" stroke="#c0c0c0" stroke-width="1"/></svg>
<div class="a" style="left:155.85px;top:664.80px;width:20.8px;height:20.8px;border-radius:50%;background:#c6a043"></div>
<div class="t" style="left:181.85px;top:665.76px;font-size:16px;line-height:20px;color:#111">service agreement</div>
<div class="a" style="left:142.55px;top:700.30px;width:12.30px;height:0;border-top:1px dotted #444"></div>
<div class="a" style="left:155.85px;top:690.40px;width:20.8px;height:20.8px;border-radius:50%;background:#c6a043"></div>
<div class="t" style="left:181.85px;top:691.36px;font-size:16px;line-height:20px;color:#111">underwriting arrangement</div>
<div class="a" style="left:91.25px;top:725.90px;width:12.30px;height:0;border-top:1px dotted #444"></div>
<div class="a" style="left:102.4px;top:714.5px;width:156.4px;height:24.2px;background:#c7e6fa;border:1px solid #b5dcf3;border-radius:2px"></div>
<svg class="ic" style="left:84.75px;top:722.60px" width="7" height="6.5" viewBox="0 0 7 6.5"><polygon points="7,0 7,6.5 0,6.5" fill="#333"/></svg>
<div class="a" style="left:104.55px;top:716.00px;width:20.8px;height:20.8px;border-radius:50%;background:#c6a043"></div>
<div class="t" style="left:130.55px;top:716.96px;font-size:16px;line-height:20px;color:#111">securities offering</div>
<div class="a" style="left:116.90px;top:751.50px;width:12.30px;height:0;border-top:1px dotted #444"></div>
<div class="a" style="left:130.20px;top:741.60px;width:20.8px;height:20.8px;border-radius:50%;background:#c6a043"></div>
<div class="t" style="left:156.20px;top:742.56px;font-size:16px;line-height:20px;color:#111">best efforts offering</div>
<div class="a" style="left:116.90px;top:777.10px;width:12.30px;height:0;border-top:1px dotted #444"></div>
<div class="a" style="left:130.20px;top:767.20px;width:20.8px;height:20.8px;border-radius:50%;background:#c6a043"></div>
<div class="t" style="left:156.20px;top:768.16px;font-size:16px;line-height:20px;color:#111">debt offering</div>
<div class="a" style="left:116.90px;top:802.70px;width:12.30px;height:0;border-top:1px dotted #444"></div>
<div class="a" style="left:130.20px;top:792.80px;width:20.8px;height:20.8px;border-radius:50%;background:#c6a043"></div>
<div class="t" style="left:156.20px;top:793.76px;font-size:16px;line-height:20px;color:#111">firm commitment offering</div>
<div class="a" style="left:116.90px;top:828.30px;width:12.30px;height:0;border-top:1px dotted #444"></div>
<div class="a" style="left:130.20px;top:818.40px;width:20.8px;height:20.8px;border-radius:50%;background:#c6a043"></div>
<div class="t" style="left:156.20px;top:819.36px;font-size:16px;line-height:20px;color:#111">private offering</div>
<div class="a" style="left:116.90px;top:853.90px;width:12.30px;height:0;border-top:1px dotted #444"></div>
<svg class="ic" style="left:110.40px;top:850.60px" width="7" height="6.5" viewBox="0 0 7 6.5"><polygon points="7,0 7,6.5 0,6.5" fill="#333"/></svg>
<div class="a" style="left:130.20px;top:844.00px;width:20.8px;height:20.8px;border-radius:50%;background:#c6a043"></div>
<div class="t" style="left:156.20px;top:844.96px;font-size:16px;line-height:20px;color:#111">public offering</div>
<div class="a" style="left:142.55px;top:879.50px;width:12.30px;height:0;border-top:1px dotted #444"></div>
<div class="a" style="left:155.85px;top:869.60px;width:20.8px;height:20.8px;border-radius:50%;background:#c6a043"></div>
<div class="t" style="left:181.85px;top:870.56px;font-size:16px;line-height:20px;color:#111">exempt offering</div>
<div class="a" style="left:65.60px;top:905.10px;width:12.30px;height:0;border-top:1px dotted #444"></div>
<svg class="ic" style="left:61.10px;top:900.60px" width="6" height="10" viewBox="0 0 6 10"><polygon points="0.5,0.5 5.5,5 0.5,9.5" fill="#fff" stroke="#c0c0c0" stroke-width="1"/></svg>
<div class="a" style="left:78.90px;top:895.20px;width:20.8px;height:20.8px;border-radius:50%;background:#c6a043"></div>
<div class="t" style="left:104.90px;top:896.16px;font-size:16px;line-height:20px;color:#111">commitment</div>
<div class="a" style="left:65.60px;top:930.70px;width:12.30px;height:0;border-top:1px dotted #444"></div>
<div class="a" style="left:78.90px;top:920.80px;width:20.8px;height:20.8px;border-radius:50%;background:#c6a043"></div>
<div class="t" style="left:104.90px;top:921.76px;font-size:16px;line-height:20px;color:#111">fibo-ln-ln-up:pas-LineItem</div>
</div>
<div style="position:absolute;left:510.5px;top:153.5px;width:1531.5px;height:943px;overflow:hidden;background:#f2f2f2">
<div class="a" style="left:533.50px;top:20.50px;width:255px;height:145px;background:#fff;border:2px solid #000"></div>
<div class="a" style="left:535.50px;top:22.50px;width:251px;height:27px;background:linear-gradient(#ececec,#e6e6e6);border-bottom:2px solid #000"></div>
<div class="t" style="left:533.50px;width:255px;text-align:center;top:25.69px;font-size:16.2px;line-height:20px;color:#1a1a1a;font-weight:normal">agreement</div>
<div class="t" style="left:543.80px;top:53.41px;font-size:14.7px;line-height:20px;color:#111;white-space:pre"><b style="color:#000">confers</b>: [0..*]</div>
<div class="t" style="left:543.80px;top:74.24px;font-size:14.7px;line-height:20px;color:#111;white-space:pre"><span style="display:inline-block;width:17px"></span><b style="color:#771a80">some</b>  `commitment`</div>
<div class="t" style="left:543.80px;top:95.07px;font-size:14.7px;line-height:20px;color:#111;white-space:pre"><b style="color:#000">has party in role</b>: party in role [0..*]</div>
<div class="t" style="left:543.80px;top:115.90px;font-size:14.7px;line-height:20px;color:#111;white-space:pre"><span style="display:inline-block;width:17px"></span><b style="color:#771a80">min</b> 2  `party in role`</div>
<div class="t" style="left:543.80px;top:136.73px;font-size:14.7px;line-height:20px;color:#111;white-space:pre"><b style="color:#000">is recognized in</b>: jurisdiction [0..*]</div>
<div class="a" style="left:842.50px;top:0.50px;width:266px;height:186px;background:#fff;border:2px solid #000"></div>
<div class="a" style="left:844.50px;top:2.50px;width:262px;height:27px;background:linear-gradient(#ececec,#e6e6e6);border-bottom:2px solid #000"></div>
<div class="t" style="left:842.50px;width:266px;text-align:center;top:4.59px;font-size:16.2px;line-height:20px;color:#1a1a1a;font-weight:normal">offering</div>
<div class="t" style="left:852.80px;top:32.81px;font-size:14.7px;line-height:20px;color:#111;white-space:pre"><b style="color:#000">applies to</b>: [0..*]</div>
<div class="t" style="left:852.80px;top:53.64px;font-size:14.7px;line-height:20px;color:#111;white-space:pre"><span style="display:inline-block;width:17px"></span><b style="color:#771a80">some</b>  `Thing`</div>
<div class="t" style="left:852.80px;top:74.47px;font-size:14.7px;line-height:20px;color:#111;white-space:pre"><b style="color:#000">has party in role</b>: party in role [0..*]</div>
<div class="t" style="left:852.80px;top:95.30px;font-size:14.7px;line-height:20px;color:#111;white-space:pre"><span style="display:inline-block;width:17px"></span><b style="color:#771a80">some</b>  `offeror`</div>
<div class="t" style="left:852.80px;top:116.13px;font-size:14.7px;line-height:20px;color:#111;white-space:pre"><span style="display:inline-block;width:17px"></span><b style="color:#771a80">some</b>  `offeree`</div>
<div class="t" style="left:852.80px;top:136.96px;font-size:14.7px;line-height:20px;color:#111;white-space:pre"><b style="color:#000">is issued by</b>: autonomous agent [0..*]</div>
<div class="t" style="left:852.80px;top:157.79px;font-size:14.7px;line-height:20px;color:#111;white-space:pre"><span style="display:inline-block;width:17px"></span><b style="color:#771a80">some</b>  `offeror`</div>
<div class="a" style="left:659.50px;top:240.50px;width:316px;height:371px;background:#fff;border:2px solid #000"></div>
<div class="a" style="left:661.50px;top:242.50px;width:312px;height:27px;background:linear-gradient(#ececec,#e6e6e6);border-bottom:2px solid #000"></div>
<div class="t" style="left:659.50px;width:316px;text-align:center;top:244.96px;font-size:15.7px;line-height:20px;color:#1a1a1a;font-weight:bold">securities offering</div>
<div class="t" style="left:670.80px;top:271.41px;font-size:14.7px;line-height:20px;color:#111;white-space:pre"><b style="color:#000">applies to</b>: [0..*]</div>
<div class="t" style="left:670.80px;top:292.24px;font-size:14.7px;line-height:20px;color:#111;white-space:pre"><span style="display:inline-block;width:17px"></span><b style="color:#771a80">some</b>  `security`</div>
<div class="t" style="left:670.80px;top:313.07px;font-size:14.7px;line-height:20px;color:#111;white-space:pre"><b style="color:#000">has governing jurisdiction</b>: jurisdiction [0..*]</div>
<div class="t" style="left:670.80px;top:333.90px;font-size:14.7px;line-height:20px;color:#111;white-space:pre"><span style="display:inline-block;width:17px"></span><b style="color:#771a80">some</b>  `jurisdiction`</div>
<div class="t" style="left:670.80px;top:354.73px;font-size:14.7px;line-height:20px;color:#111;white-space:pre"><b style="color:#000">has offering price</b>: monetary price [0..*]</div>
<div class="t" style="left:670.80px;top:375.56px;font-size:14.7px;line-height:20px;color:#111;white-space:pre"><span style="display:inline-block;width:17px"></span><b style="color:#771a80">exactly</b> 1  `monetary price`</div>
<div class="t" style="left:670.80px;top:396.39px;font-size:14.7px;line-height:20px;color:#111;white-space:pre"><b style="color:#000">has party in role</b>: party in role [0..*]</div>
<div class="t" style="left:670.80px;top:417.22px;font-size:14.7px;line-height:20px;color:#111;white-space:pre"><span style="display:inline-block;width:17px"></span><b style="color:#771a80">min</b> 0  `agent for service of process`</div>
<div class="t" style="left:670.80px;top:438.05px;font-size:14.7px;line-height:20px;color:#111;white-space:pre"><b style="color:#000">is evidenced by</b>: contract document [0..*]</div>
<div class="t" style="left:670.80px;top:458.88px;font-size:14.7px;line-height:20px;color:#111;white-space:pre"><span style="display:inline-block;width:17px"></span><b style="color:#771a80">some</b>  `offering document`</div>
<div class="t" style="left:670.80px;top:479.71px;font-size:14.7px;line-height:20px;color:#111;white-space:pre"><b style="color:#000">is issued by</b>: autonomous agent [0..*]</div>
<div class="t" style="left:670.80px;top:500.54px;font-size:14.7px;line-height:20px;color:#111;white-space:pre"><span style="display:inline-block;width:17px"></span><b style="color:#771a80">some</b> ( `issuer`</div>
<div class="t" style="left:670.80px;top:521.37px;font-size:14.7px;line-height:20px;color:#111;white-space:pre"><span style="display:inline-block;width:28px"></span><b style="color:#771a80">or</b>  `offeror` )</div>
<div class="t" style="left:670.80px;top:542.20px;font-size:14.7px;line-height:20px;color:#111;white-space:pre"><b style="color:#000">is offering of</b>: security [0..*]</div>
<div class="t" style="left:670.80px;top:563.03px;font-size:14.7px;line-height:20px;color:#111;white-space:pre"><b style="color:#000">is underwritten by</b>: underwriter [0..*]</div>
<div class="t" style="left:670.80px;top:583.86px;font-size:14.7px;line-height:20px;color:#111;white-space:pre"><span style="display:inline-block;width:17px"></span><b style="color:#771a80">min</b> 0  `security underwriter`</div>
<div class="a" style="left:19.50px;top:665.50px;width:410px;height:301px;background:#fff;border:2px solid #000"></div>
<div class="a" style="left:21.50px;top:667.50px;width:406px;height:27px;background:linear-gradient(#ececec,#e6e6e6);border-bottom:2px solid #000"></div>
<div class="t" style="left:19.50px;width:410px;text-align:center;top:670.49px;font-size:16.2px;line-height:20px;color:#1a1a1a;font-weight:normal">debt offering</div>
<div class="t" style="left:29.80px;top:699.01px;font-size:14.7px;line-height:20px;color:#111;white-space:pre"><b style="color:#000">applies to</b>: [0..*]</div>
<div class="t" style="left:29.80px;top:719.84px;font-size:14.7px;line-height:20px;color:#111;white-space:pre"><span style="display:inline-block;width:17px"></span><b style="color:#771a80">some</b>  `debt instrument`</div>
<div class="t" style="left:29.80px;top:740.67px;font-size:14.7px;line-height:20px;color:#111;white-space:pre"><b style="color:#000">has call terms</b>: call feature [0..*]</div>
<div class="t" style="left:29.80px;top:761.50px;font-size:14.7px;line-height:20px;color:#111;white-space:pre"><b style="color:#000">has default lot size</b>: integer [0..*]</div>
<div class="t" style="left:29.80px;top:782.33px;font-size:14.7px;line-height:20px;color:#111;white-space:pre"><b style="color:#000">has duration to maturity</b>: explicit duration [0..*]</div>
<div class="t" style="left:29.80px;top:803.16px;font-size:14.7px;line-height:20px;color:#111;white-space:pre"><b style="color:#000">has interest payment terms</b>: interest payment terms [0..*]</div>
<div class="t" style="left:29.80px;top:823.99px;font-size:14.7px;line-height:20px;color:#111;white-space:pre"><span style="display:inline-block;width:17px"></span><b style="color:#771a80">some</b>  `interest payment terms`</div>
<div class="t" style="left:29.80px;top:844.82px;font-size:14.7px;line-height:20px;color:#111;white-space:pre"><b style="color:#000">has redemption terms</b>: redemption provision [0..*]</div>
<div class="t" style="left:29.80px;top:865.65px;font-size:14.7px;line-height:20px;color:#111;white-space:pre"><span style="display:inline-block;width:17px"></span><b style="color:#771a80">min</b> 0  `redemption provision`</div>
<div class="t" style="left:29.80px;top:886.48px;font-size:14.7px;line-height:20px;color:#111;white-space:pre"><b style="color:#000">has repayment terms</b>: principal repayment terms [0..*]</div>
<div class="t" style="left:29.80px;top:907.31px;font-size:14.7px;line-height:20px;color:#111;white-space:pre"><span style="display:inline-block;width:17px"></span><b style="color:#771a80">some</b>  `principal repayment terms`</div>
<div class="t" style="left:29.80px;top:928.14px;font-size:14.7px;line-height:20px;color:#111;white-space:pre"><b style="color:#000">is callable</b>: boolean [0..*]</div>
<div class="a" style="left:482.50px;top:832.50px;width:202px;height:40px;background:#fff;border:2px solid #000"></div>
<div class="a" style="left:484.50px;top:834.50px;width:198px;height:27px;background:linear-gradient(#ececec,#e6e6e6);border-bottom:2px solid #000"></div>
<div class="t" style="left:482.50px;width:202px;text-align:center;top:836.39px;font-size:16.2px;line-height:20px;color:#1a1a1a;font-weight:normal">firm commitment offering</div>
<div class="a" style="left:738.50px;top:832.50px;width:160px;height:40px;background:#fff;border:2px solid #000"></div>
<div class="a" style="left:740.50px;top:834.50px;width:156px;height:27px;background:linear-gradient(#ececec,#e6e6e6);border-bottom:2px solid #000"></div>
<div class="t" style="left:738.50px;width:160px;text-align:center;top:836.39px;font-size:16.2px;line-height:20px;color:#1a1a1a;font-weight:normal">best efforts offering</div>
<div class="a" style="left:951.50px;top:811.50px;width:293px;height:82px;background:#fff;border:2px solid #000"></div>
<div class="a" style="left:953.50px;top:813.50px;width:289px;height:27px;background:linear-gradient(#ececec,#e6e6e6);border-bottom:2px solid #000"></div>
<div class="t" style="left:951.50px;width:293px;text-align:center;top:815.89px;font-size:16.2px;line-height:20px;color:#1a1a1a;font-weight:normal">public offering</div>
<div class="t" style="left:962.30px;top:844.41px;font-size:14.7px;line-height:20px;color:#111;white-space:pre"><b style="color:#000">is evidenced by</b>: contract document [0..*]</div>
<div class="t" style="left:962.30px;top:865.24px;font-size:14.7px;line-height:20px;color:#111;white-space:pre"><span style="display:inline-block;width:17px"></span><b style="color:#771a80">some</b>  `prospectus`</div>
<div class="a" style="left:1297.50px;top:811.50px;width:313px;height:82px;background:#fff;border:2px solid #000"></div>
<div class="a" style="left:1299.50px;top:813.50px;width:309px;height:27px;background:linear-gradient(#ececec,#e6e6e6);border-bottom:2px solid #000"></div>
<div class="t" style="left:1297.50px;width:313px;text-align:center;top:815.89px;font-size:16.2px;line-height:20px;color:#1a1a1a;font-weight:normal">private offering</div>
<div class="t" style="left:1307.80px;top:844.41px;font-size:14.7px;line-height:20px;color:#111;white-space:pre"><b style="color:#000">is evidenced by</b>: contract document [0..*]</div>
<div class="t" style="left:1307.80px;top:865.24px;font-size:14.7px;line-height:20px;color:#111;white-space:pre"><span style="display:inline-block;width:17px"></span><b style="color:#771a80">some</b>  `private placement memorandum`</div>
<svg class="a" style="left:0;top:0" width="1532" height="943"><polyline points="661.50,-13.50 661.50,22.50" fill="none" stroke="#000" stroke-width="2" stroke-linejoin="miter"/><polyline points="680.50,241.10 661.00,212.90 661.00,186.70" fill="none" stroke="#000" stroke-width="2" stroke-linejoin="miter"/><polygon points="661.00,165.70 652.00,186.70 670.00,186.70" fill="#fff" stroke="#000" stroke-width="2" stroke-linejoin="miter"/><polyline points="956.10,241.10 975.50,213.30 975.50,207.50" fill="none" stroke="#000" stroke-width="2" stroke-linejoin="miter"/><polygon points="975.50,186.50 966.50,207.50 984.50,207.50" fill="#fff" stroke="#000" stroke-width="2" stroke-linejoin="miter"/><polyline points="224.80,667.00 224.80,638.70 640.53,489.59" fill="none" stroke="#000" stroke-width="2" stroke-linejoin="miter"/><polygon points="660.30,482.50 637.49,481.12 643.57,498.06" fill="#fff" stroke="#000" stroke-width="2" stroke-linejoin="miter"/><polyline points="584.30,833.30 584.30,638.70 645.32,583.58" fill="none" stroke="#000" stroke-width="2" stroke-linejoin="miter"/><polygon points="660.90,569.50 639.28,576.90 651.35,590.26" fill="#fff" stroke="#000" stroke-width="2" stroke-linejoin="miter"/><polyline points="818.00,833.30 818.09,633.50" fill="none" stroke="#000" stroke-width="2" stroke-linejoin="miter"/><polygon points="818.10,612.50 809.09,633.50 827.09,633.50" fill="#fff" stroke="#000" stroke-width="2" stroke-linejoin="miter"/><polyline points="1097.90,812.50 1097.90,638.70 992.27,559.14" fill="none" stroke="#000" stroke-width="2" stroke-linejoin="miter"/><polygon points="975.50,546.50 986.86,566.32 997.69,551.95" fill="#fff" stroke="#000" stroke-width="2" stroke-linejoin="miter"/><polyline points="1453.80,812.50 1453.80,638.70 995.43,486.13" fill="none" stroke="#000" stroke-width="2" stroke-linejoin="miter"/><polygon points="975.50,479.50 992.58,494.67 998.27,477.59" fill="#fff" stroke="#000" stroke-width="2" stroke-linejoin="miter"/></svg>
</div>
</body></html>
